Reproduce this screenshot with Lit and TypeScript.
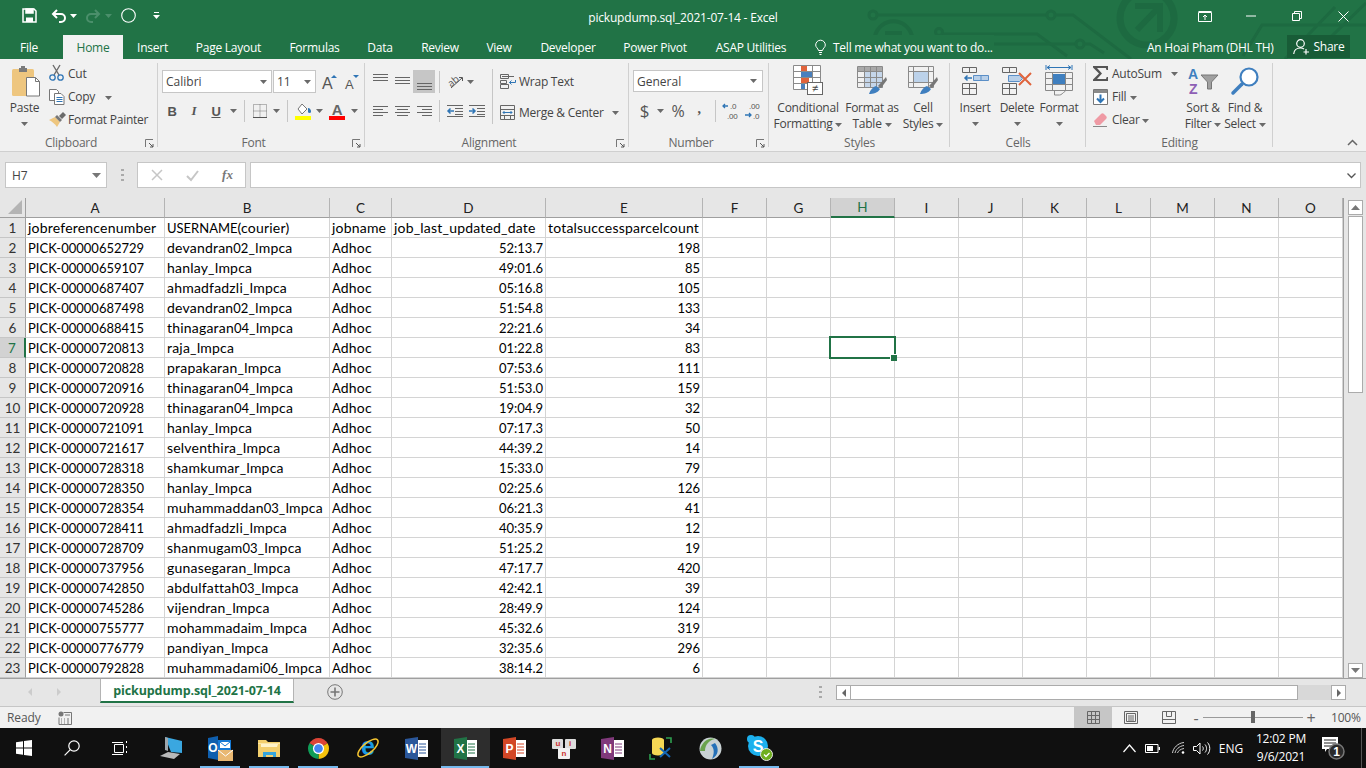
import { LitElement, html, css, svg } from "lit";
import { customElement } from "lit/decorators.js";

const C5 = html`<svg class="car" width="7" height="4" viewBox="0 0 7 4"><path d="M0 0h7L3.500 4z" fill="#6a6a6a"/></svg>`;
const CW = html`<svg width="7" height="4" viewBox="0 0 7 4"><path d="M0 0h7L3.500 4z" fill="#fff"/></svg>`;
const CD = html`<svg width="7" height="4" viewBox="0 0 7 4"><path d="M0 0h7L3.500 4z" fill="#4b8f6b"/></svg>`;
const launcher = html`<svg class="launch" width="9" height="9" viewBox="0 0 9 9" fill="none" stroke="#777"><path d="M.5 8V.5H8"/><path d="M4 4l4 4M8 5v3H5" stroke="#555"/></svg>`;

const pattern = html`<svg class="pattern" width="506" height="59" viewBox="0 0 506 59" fill="none" stroke="#1d6a41" stroke-width="3">
  <circle cx="13" cy="15" r="4"/><path d="M17 15H187"/><circle cx="191" cy="15" r="4"/><path d="M195 15h18l50 38 8 6"/>
  <path d="M15 36a19 19 0 0 1 37 0M25 33h17" stroke-width="4"/>
  <circle cx="79" cy="32" r="3.500"/><path d="M83 34H177l30 22"/><path d="M133 44h82"/><circle cx="220" cy="44" r="4"/><path d="M224 44h6l14 9"/>
  <path d="M287 -9a27 27 0 1 0 .1 0z" stroke-width="7"/><path d="M277 30L300 6M275 6h25v26" stroke-width="6"/>
  <path d="M383 56l19-31H506M448 59L506 3M425 59l50-52"/>
</svg>`;

const saveI = html`<svg width="15" height="15" viewBox="0 0 15 15" fill="none" stroke="#fff" stroke-width="1.500"><path d="M1 1h11l2 2v11H1z"/><path d="M4 1h7v4H4z" fill="#fff"/><path d="M4 9.500h7V14H4z" fill="#fff" stroke="none"/></svg>`;
const undoI = html`<svg width="15" height="14" viewBox="0 0 15 14" fill="none" stroke="#fff" stroke-width="2"><path d="M6 1L2 5l4 4M2 5h8a3.600 3.600 0 0 1 0 8H8"/></svg>`;
const redoI = html`<svg width="15" height="14" viewBox="0 0 15 14" fill="none" stroke="#4b8f6b" stroke-width="2"><path d="M9 1l4 4-4 4M13 5H5a3.600 3.600 0 0 0 0 8h2"/></svg>`;
const circI = html`<svg width="15" height="15" viewBox="0 0 15 15" fill="none" stroke="#fff" stroke-width="1.100"><circle cx="7.500" cy="7.500" r="6.800"/></svg>`;
const custI = html`<svg width="7" height="7" viewBox="0 0 7 7" fill="#fff"><path d="M1 0h5v1H1zM0 3h7L3.500 7z"/></svg>`;
const rdI = html`<svg width="14" height="11" viewBox="0 0 14 11" fill="none" stroke="#fff"><path d="M.5 1.500h13v9H.5zM.5 .5h13"/><path d="M7 9V4M5 6l2-2 2 2"/></svg>`;
const minI = html`<svg width="10" height="10" viewBox="0 0 10 10"><path d="M0 5h10" stroke="#fff"/></svg>`;
const resI = html`<svg width="10" height="10" viewBox="0 0 10 10" fill="none" stroke="#fff"><path d="M2.500 2.500V.5h7v7h-2M.5 2.500h7v7h-7z"/></svg>`;
const clsI = html`<svg width="11" height="11" viewBox="0 0 11 11" stroke="#fff"><path d="M.5.500l10 10M10.500.500l-10 10"/></svg>`;
const bulbI = html`<svg width="11" height="15" viewBox="0 0 11 15" fill="none" stroke="#fff"><path d="M3.500 10.500C3 8 .7 7.500.7 5a4.800 4.800 0 0 1 9.600 0c0 2.500-2.300 3-2.800 5.500zM4 12.500h3M4.500 14.500h2"/></svg>`;
const personI = html`<svg width="17" height="16" viewBox="0 0 17 16" fill="none" stroke="#fff" stroke-width="1.200"><circle cx="7.500" cy="4.500" r="3.800"/><path d="M.7 15c.3-3.500 2.800-6 6.800-6 1.500 0 2.500.3 3.500 1M13 10v5.500M10.500 13H16"/></svg>`;

const pasteI = html`<svg class="pasteic" width="29" height="32" viewBox="0 0 29 32"><rect x="0" y="4" width="22" height="27" rx="1.500" fill="#eec67f"/><path d="M7 3h2V1h4v2h2v4H7z" fill="#7a7a7a"/><path d="M14.500 12.500h9l4 4v14.500h-13z" fill="#fff" stroke="#777"/><path d="M23.500 12.500v4h4" fill="none" stroke="#777"/></svg>`;
const cutI = html`<svg width="15" height="16" viewBox="0 0 15 16" fill="none"><path d="M5 10L11 0M10 10L4 0" stroke="#6b6b6b" stroke-width="1.400"/><circle cx="3.500" cy="12.500" r="2.700" stroke="#2f75b5" stroke-width="1.300"/><circle cx="11.500" cy="12.500" r="2.700" stroke="#2f75b5" stroke-width="1.300"/></svg>`;
const copyI = html`<svg width="16" height="16" viewBox="0 0 16 16" fill="#fff" stroke="#777"><path d="M.5.500h7l2 2v9h-9z"/><path d="M5.500 4.500h6.500l3 3v8h-9.500z"/><path d="M7.500 8.500h6M7.500 10.500h6M7.500 12.500h6" stroke="#2f75b5"/></svg>`;
const fpI = html`<svg width="17" height="15" viewBox="0 0 17 15"><path d="M0 8l6-3 5 5-3 5C6 12 3 9.500 0 8z" fill="#eec67f"/><path d="M6 5l5 5 2-2-5-5z" fill="#777"/><path d="M10 4l4-4 3 3-4 4z" fill="#6b6b6b"/></svg>`;

const borderI = html`<svg width="14" height="14" viewBox="0 0 14 14" fill="none" stroke="#777" stroke-dasharray="1 1"><path d="M.5.500h13v13H.5zM7 .5v13M.5 7h13"/><path d="M0 13.500h14" stroke="#555" stroke-dasharray="none"/></svg>`;
const fillI = html`<svg width="17" height="17" viewBox="0 0 17 17"><path d="M7 1l5 5-5 5-4-5z" fill="#fff" stroke="#777"/><path d="M13 5c2 0 3 2 3 3.500a1.500 1.500 0 0 1-3 0z" fill="#2f75b5"/><rect x="0" y="13" width="16" height="4" fill="#ffff00"/></svg>`;
const colorI = html`<svg width="16" height="17" viewBox="0 0 16 17"><text x="8" y="12" text-anchor="middle" font-family="Liberation Sans" font-size="15" font-weight="700" fill="#666">A</text><rect y="13" width="16" height="4" fill="#ff0000"/></svg>`;
const growI = html`<svg width="18" height="16" viewBox="0 0 18 16"><text x="0" y="15" font-family="Liberation Sans" font-size="16" fill="#555">A</text><path d="M9 4l3-3 3 3z" fill="#2f75b5"/></svg>`;
const shrinkI = html`<svg width="16" height="16" viewBox="0 0 16 16"><text x="1" y="15" font-family="Liberation Sans" font-size="13" fill="#555">A</text><path d="M9 1h6l-3 3z" fill="#2f75b5"/></svg>`;

const lines = (h: number, ys: number[], xs: [number, number][]) => html`<svg width="15" height=${h} viewBox=${`0 0 15 ${h}`} stroke="#666">${ys.map((y, i) => svg`<path d=${`M${xs[i][0]} ${y}.5H${xs[i][1]}`}></path>`)}</svg>`;
const F: [number, number] = [0, 15];
const alTop = lines(23, [4, 7, 10], [F, F, F]);
const alMid = lines(23, [7, 10, 13], [F, F, F]);
const alBot = lines(23, [13, 16, 19], [F, F, F]);
const alL = lines(12, [1, 4, 7, 10], [F, [0, 10], F, [0, 10]]);
const alC = lines(12, [1, 4, 7, 10], [F, [2, 13], F, [2, 13]]);
const alR = lines(12, [1, 4, 7, 10], [F, [5, 15], F, [5, 15]]);
const orientI = html`<svg width="16" height="15" viewBox="0 0 16 15"><text x="1" y="11" transform="rotate(-40 6 8)" font-family="Open Sans" font-size="10" fill="#555">ab</text><path d="M4 14L15 4M12 3.500h3.500v3.500" fill="none" stroke="#555"/></svg>`;
const outI = html`<svg width="16" height="12" viewBox="0 0 16 12" fill="none"><path d="M0 .5h16M8 3.500h8M8 6.500h8M8 9.500h8M0 11.500h16" stroke="#666"/><path d="M7 6H1M3.500 3.500L1 6l2.500 2.500" stroke="#2f75b5" stroke-width="1.500"/></svg>`;
const inI = html`<svg width="16" height="12" viewBox="0 0 16 12" fill="none"><path d="M0 .5h16M8 3.500h8M8 6.500h8M8 9.500h8M0 11.500h16" stroke="#666"/><path d="M0 6h6M3.500 3.500L6 6 3.500 8.500" stroke="#2f75b5" stroke-width="1.500"/></svg>`;
const wrapI = html`<svg width="16" height="15" viewBox="0 0 16 15" fill="none" stroke="#666"><path d="M.5.500h8v4h-8zM.5 6.500h6v3h-6zM.5 10.500h8v4h-8zM2 2.500h12"/><path d="M15.500 6v2.500h-6M11.500 6.500l-2 2 2 2" stroke="#2f75b5"/></svg>`;
const mergeI = html`<svg width="15" height="15" viewBox="0 0 15 15" fill="none" stroke="#666"><path d="M.5.500h14v14H.5zM.5 4.500h14M.5 10.500h14M4.500 10.500v4M10.500 10.500v4"/><path d="M3 7.500h9M4.500 6L3 7.500 4.500 9M10.500 6L12 7.500 10.500 9" stroke="#2f75b5"/></svg>`;
const decL = html`<svg width="16" height="17" viewBox="0 0 16 17"><text x="8" y="7" font-family="Liberation Sans" font-size="8" fill="#555">.0</text><text x="5" y="16.500" font-family="Liberation Sans" font-size="8" fill="#555">.00</text><path d="M6 4H1M3 2L1 4l2 2" fill="none" stroke="#2f75b5" stroke-width="1.300"/></svg>`;
const decR = html`<svg width="16" height="17" viewBox="0 0 16 17"><text x="5" y="7" font-family="Liberation Sans" font-size="8" fill="#555">.00</text><text x="9" y="16.500" font-family="Liberation Sans" font-size="8" fill="#555">.0</text><path d="M1 13h6M5 11l2 2-2 2" fill="none" stroke="#2f75b5" stroke-width="1.300"/></svg>`;

const gridLines = svg`<path d="M.5.500h25v21H.5zM.5 5.500h25M.5 11.500h25M.5 16.500h25M7.500.500v21M13.500.500v21M19.500.500v21" fill="none" stroke="#8a8a8a"/>`;
const brush = svg`<path d="M12 28c4 0 9-1 11-5l-4-3c-3 1-6 4-7 8z" fill="#3f7fbf"/><path d="M21 20l8-9 1 3-6 8z" fill="#777"/>`;
const condI = html`<svg width="31" height="31" viewBox="0 0 31 31"><path d="M.5.500h27v24H.5zM.5 6.500h27M.5 12.500h27M.5 18.500h27M8.500.500v24M19.500.500v24" fill="#fff" stroke="#8a8a8a"/><rect x="8" y="1" width="6" height="5" fill="#e0643c"/><rect x="8" y="7" width="11" height="5" fill="#4a80bd"/><rect x="8" y="13" width="8" height="5" fill="#e0643c"/><rect x="8" y="19" width="4" height="5" fill="#4a80bd"/><rect x="14.500" y="17.500" width="15" height="12" fill="#fff" stroke="#666"/><text x="22" y="27" text-anchor="middle" font-family="Liberation Sans" font-size="11" fill="#444">≠</text></svg>`;
const fmtTableI = html`<svg width="30" height="29" viewBox="0 0 30 29"><rect x="1" y="1" width="24" height="5" fill="#a9a9a9"/><rect x="8" y="6" width="18" height="16" fill="#c5d6ea"/>${gridLines}${brush}</svg>`;
const cellStyleI = html`<svg width="30" height="29" viewBox="0 0 30 29"><rect x="6" y="6" width="15" height="10" fill="#bcd2ea"/><path d="M.5.500h25v21H.5zM.5 5.500h25M.5 16.500h25M5.500.500v21M20.500.500v21" fill="none" stroke="#8a8a8a"/>${brush}</svg>`;
const insI = html`<svg width="27" height="28" viewBox="0 0 27 28" fill="none" stroke="#666"><path d="M.5.500h14v5H.5zM7.500.500v5M.5 16.500h14v11H.5zM.5 21.500h14M7.500 16.500v11"/><path d="M11.500 8.500h15v5h-15zM19 8.500v5" fill="#b9d0e9" stroke="#5b8fc7"/><path d="M10 11H3M5.500 8.500L3 11l2.500 2.500" stroke="#2f75b5" stroke-width="1.500"/></svg>`;
const delI = html`<svg width="31" height="28" viewBox="0 0 31 28" fill="none" stroke="#666"><path d="M.5.500h14v5H.5zM7.500.500v5M.5 16.500h14v11H.5zM.5 21.500h14M7.500 16.500v11"/><path d="M6.500 8.500h11l3 3-3 3h-11z" fill="#b9d0e9" stroke="#5b8fc7"/><path d="M17 6l12 12M29 6L17 18" stroke="#e0643c" stroke-width="2"/></svg>`;
const fmtI = html`<svg width="29" height="32" viewBox="0 0 29 32" fill="none" stroke="#888"><path d="M1 0v5M27 0v5M2 2.500h24M5 .500L2 2.500l3 2M23 .500l3 2-3 2" stroke="#2f75b5"/><path d="M.5 7.500h27v18H.5zM.5 13.500h27M.5 19.500h27M7.500 7.500v18M20.500 7.500v18"/><rect x="8" y="9" width="12" height="10" fill="#3f7fbf" stroke="none"/><path d="M9.500 26v4h5c2 0 3-2 6-4"/></svg>`;
const sigmaI = html`<svg width="16" height="15" viewBox="0 0 16 15"><path d="M0 0h15v4h-1.500l-.7-2H4l5 5.500L4 13h9l.7-2H15v4H0v-1.500L6 7.500 0 1.500z" fill="#555"/></svg>`;
const fillDI = html`<svg width="15" height="16" viewBox="0 0 15 16" fill="#fff"><path d="M.5.500h14v15H.5z" stroke="#777"/><rect x="1" y="1" width="13" height="3" fill="#8a8a8a"/><path d="M7.500 5.500v7M4 9.500l3.500 3.500L11 9.500" fill="none" stroke="#2f75b5" stroke-width="2"/></svg>`;
const clearI = html`<svg width="15" height="14" viewBox="0 0 15 14"><path d="M1 8l7-7c1-1 2-1 3 0l2 2c1 1 1 2 0 3l-6 6H3z" fill="#ef9aa4"/><path d="M0 13.500h14" stroke="#888"/></svg>`;
const sortI = html`<svg width="31" height="28" viewBox="0 0 31 28"><text x="0" y="12" font-family="Liberation Sans" font-size="14" font-weight="700" fill="#3f7fbf">A</text><text x="1" y="27" font-family="Liberation Sans" font-size="14" font-weight="700" fill="#8e5fb5">Z</text><path d="M13 8h17l-6.500 7v7h-4v-7z" fill="#a0a0a0" stroke="#777"/></svg>`;
const findI = html`<svg width="29" height="28" viewBox="0 0 29 28" fill="none"><circle cx="18" cy="10" r="8.500" stroke="#3f7fbf" stroke-width="2.200" fill="#fff"/><path d="M11 17L2 26" stroke="#3f7fbf" stroke-width="3.500" stroke-linecap="round"/></svg>`;

const xI = html`<svg width="12" height="12" viewBox="0 0 12 12" stroke="#c6c6c6" stroke-width="1.500"><path d="M1 1l10 10M11 1L1 11"/></svg>`;
const okI = html`<svg width="13" height="11" viewBox="0 0 13 11" fill="none" stroke="#c6c6c6" stroke-width="2"><path d="M1 6l4 4 7-9"/></svg>`;
const dots = html`<svg width="3" height="12" viewBox="0 0 3 12" fill="#aaa"><rect y="0" width="3" height="2"/><rect y="5" width="3" height="2"/><rect y="10" width="3" height="2"/></svg>`;

const macroI = html`<svg width="14" height="14" viewBox="0 0 14 14"><circle cx="3" cy="3" r="2.500" fill="#777"/><path d="M5.500 1.500h8v12H1V6.500" fill="none" stroke="#777"/><path d="M3 8h1M6 8h1M9 8h2M3 10h1M6 10h1M9 10h2M3 12h1M6 12h1M9 12h2M7 4h5" stroke="#777"/></svg>`;
const vNormal = html`<svg width="13" height="13" viewBox="0 0 13 13" fill="none" stroke="#666"><path d="M.5.500h12v12H.5zM4.500.500v12M8.500.500v12M.5 4.500h12M.5 8.500h12"/></svg>`;
const vPage = html`<svg width="14" height="13" viewBox="0 0 14 13" fill="none" stroke="#666"><path d="M.5.500h13v12H.5zM2.500 2.500h9v8h-9zM4 5h6M4 7h6M4 9h6"/></svg>`;
const vBreak = html`<svg width="14" height="13" viewBox="0 0 14 13" fill="none" stroke="#666"><path d="M.5 12.500V.500h13v12zM.5 8.500h13M4.500.500v5h5v-5"/></svg>`;

const winI = html`<svg width="16" height="16" viewBox="0 0 16 16" fill="#fff"><path d="M0 2.200l7-1v6.300H0zM8 1l8-1v7.500H8zM0 8.500h7v6.300l-7-1zM8 8.500h8V16l-8-1.100z"/></svg>`;
const searchI = html`<svg width="16" height="16" viewBox="0 0 16 16" fill="none" stroke="#fff" stroke-width="1.200"><circle cx="10" cy="6" r="5.200"/><path d="M6.300 9.700L.6 15.400"/></svg>`;
const taskI = html`<svg width="16" height="15" viewBox="0 0 16 15" fill="none" stroke="#fff"><path d="M2.500 3.500h9v8h-9zM0 1.500h11M0 13.500h11M14.500 0v2M14.500 5v2M14.500 10v2"/></svg>`;
const pcI = html`<svg width="24" height="24" viewBox="0 0 24 24"><path d="M5 1l17 4v12l-11-1z" fill="#3aa7e0"/><path d="M5 1l3 1v13l-3-1z" fill="#9fa7ad"/><path d="M0 20l8-4 12 2-6 5z" fill="#b9b9b9"/></svg>`;
const outlookI = html`<svg width="25" height="25" viewBox="0 0 25 25"><path d="M0 2l10-2v24L0 22z" fill="#0f5fae"/><rect x="10" y="4" width="13" height="11" fill="#1579d4"/><path d="M12 6h10v6H12z" fill="#fff"/><path d="M12 6l5 4 5-4" fill="none" stroke="#1579d4"/><text x="5" y="16" text-anchor="middle" font-family="Liberation Sans" font-size="12" font-weight="700" fill="#fff">O</text><rect x="10" y="14" width="15" height="11" fill="#e9b872"/><path d="M10 14l7.500 6 7.500-6" fill="none" stroke="#fff"/></svg>`;
const folderI = html`<svg width="23" height="19" viewBox="0 0 23 19"><path d="M0 1h8l2 2h12v15H0z" fill="#f3cf6d"/><rect x="0" y="4" width="22" height="1" fill="#fbe7a7"/><path d="M3 5h17l-1 3H3z" fill="#fff3c8"/><path d="M5 18v-5h13v5h-3v-2H8v2z" fill="#35a5dc"/></svg>`;
const chromeI = html`<svg width="23" height="23" viewBox="0 0 24 24"><path d="M12 12L2.500 6.500A11 11 0 0 1 21.500 6.500z" fill="#dc4437"/><path d="M12 12l9.500-5.500A11 11 0 0 1 12 23z" fill="#f4c20d"/><path d="M12 12v11A11 11 0 0 1 2.500 6.500z" fill="#0f9d58"/><circle cx="12" cy="12" r="5.800" fill="#fff"/><circle cx="12" cy="12" r="4.500" fill="#4285f4"/></svg>`;
const ieI = html`<svg width="24" height="24" viewBox="0 0 24 24" fill="none"><text x="12" y="19" text-anchor="middle" font-family="Liberation Sans" font-size="25" font-weight="700" fill="#1a9be6">e</text><ellipse cx="12" cy="12" rx="12.500" ry="5" transform="rotate(-40 12 12)" stroke="#f5c531" stroke-width="1.500"/></svg>`;
const officeI = (c: string, l: string) => html`<svg width="23" height="23" viewBox="0 0 23 23"><rect x="10" y="3" width="13" height="17" fill="#fff"/><path d="M14 7h7M14 10h7M14 13h7M14 16h7" stroke=${c}/><path d="M0 2l13-2v23L0 21z" fill=${c}/><text x="6.500" y="16" text-anchor="middle" font-family="Liberation Sans" font-size="12" font-weight="700" fill="#fff">${l}</text></svg>`;
const uniI = html`<svg width="24" height="22" viewBox="0 0 24 22" font-family="Liberation Sans" font-size="8" font-weight="700" fill="#c33"><rect y="2" width="11" height="10" rx="1" fill="#ddd"/><rect x="13" y="2" width="11" height="10" rx="1" fill="#ddd"/><rect x="6" y="11" width="12" height="11" rx="1" fill="#f1f1f1"/><text x="3.500" y="9">u</text><text x="17" y="9">i</text><text x="9.500" y="19">n</text></svg>`;
const dbI = html`<svg width="23" height="23" viewBox="0 0 23 23" fill="none"><path d="M2 3a6 2.500 0 0 1 12 0v13a6 2.500 0 0 1-12 0z" fill="#f7d854"/><path d="M16 1h5v5M0 17v5h5" stroke="#2e9e4f" stroke-width="1.600"/><path d="M10 20l10-9M20 20L10 11" stroke="#1467b5" stroke-width="2"/></svg>`;
const globeI = html`<svg width="23" height="23" viewBox="0 0 23 23"><circle cx="11.500" cy="11.500" r="11" fill="#c9d2d4"/><path d="M1 14C2 6 9 0 16 2c-6 1-10 6-10 12z" fill="#6aa34e"/><path d="M16 6c4 5 4 12-3 16 2-5 3-10-1-14z" fill="#2571b8"/></svg>`;
const skypeI = html`<svg width="26" height="26" viewBox="0 0 26 26"><circle cx="11" cy="11" r="10" fill="#1cb0ed"/><circle cx="4" cy="4" r="4" fill="#1cb0ed"/><circle cx="18" cy="18" r="4" fill="#1cb0ed"/><text x="11" y="17" text-anchor="middle" font-family="Liberation Sans" font-size="16" font-weight="700" fill="#fff">S</text><circle cx="19.500" cy="19.500" r="6" fill="#6fae1e" stroke="#e8e8e8"/><path d="M17 19.500l2 2 3.500-3.500" fill="none" stroke="#fff" stroke-width="1.300"/></svg>`;

const upI = html`<svg width="13" height="9" viewBox="0 0 13 9" fill="none" stroke="#fff" stroke-width="1.200"><path d="M.5 8l6-7 6 7"/></svg>`;
const batI = html`<svg width="15" height="9" viewBox="0 0 15 9"><path d="M.5.500h12.500v8H.5z" fill="none" stroke="#fff"/><rect x="2" y="2" width="6" height="5" fill="#fff"/><rect x="13.500" y="3" width="1.500" height="3" fill="#fff"/></svg>`;
const wifiI = html`<svg width="13" height="12" viewBox="0 0 13 12" fill="none" stroke="#ccc"><path d="M.5 11C1 6 6 1 12 .5M3 11c.5-3 4-7 9-7.500M5.500 11c.5-2 3-4 6.500-4.500"/><circle cx="11" cy="10.500" r="1.300" fill="#fff" stroke="none"/></svg>`;
const spkI = html`<svg width="17" height="13" viewBox="0 0 17 13" fill="none" stroke="#fff"><path d="M.5 4.500h3l3.500-3.500v11L3.500 8.500h-3z"/><path d="M9.500 4.500c1 1 1 3 0 4M12 2.500c2 2 2 6 0 8M14.500 .5c3 3 3 9 0 12"/></svg>`;
const noteI = html`<svg width="24" height="22" viewBox="0 0 24 22"><path d="M1 0h16v12H6l-2 3v-3H1z" fill="#fff"/><path d="M3 3h12M3 6h12M3 9h8" stroke="#222"/><circle cx="15.500" cy="14.500" r="7.500" fill="#2a2a2a" stroke="#777" stroke-width="1.500"/><text x="15.500" y="19" text-anchor="middle" font-family="Liberation Sans" font-size="12" font-weight="700" fill="#fff">1</text></svg>`;

const DATA: [string, string, string, number][] = [
  ["PICK-00000652729", "devandran02_Impca", "52:13.7", 198],
  ["PICK-00000659107", "hanlay_Impca", "49:01.6", 85],
  ["PICK-00000687407", "ahmadfadzli_Impca", "05:16.8", 105],
  ["PICK-00000687498", "devandran02_Impca", "51:54.8", 133],
  ["PICK-00000688415", "thinagaran04_Impca", "22:21.6", 34],
  ["PICK-00000720813", "raja_Impca", "01:22.8", 83],
  ["PICK-00000720828", "prapakaran_Impca", "07:53.6", 111],
  ["PICK-00000720916", "thinagaran04_Impca", "51:53.0", 159],
  ["PICK-00000720928", "thinagaran04_Impca", "19:04.9", 32],
  ["PICK-00000721091", "hanlay_Impca", "07:17.3", 50],
  ["PICK-00000721617", "selventhira_Impca", "44:39.2", 14],
  ["PICK-00000728318", "shamkumar_Impca", "15:33.0", 79],
  ["PICK-00000728350", "hanlay_Impca", "02:25.6", 126],
  ["PICK-00000728354", "muhammaddan03_Impca", "06:21.3", 41],
  ["PICK-00000728411", "ahmadfadzli_Impca", "40:35.9", 12],
  ["PICK-00000728709", "shanmugam03_Impca", "51:25.2", 19],
  ["PICK-00000737956", "gunasegaran_Impca", "47:17.7", 420],
  ["PICK-00000742850", "abdulfattah03_Impca", "42:42.1", 39],
  ["PICK-00000745286", "vijendran_Impca", "28:49.9", 124],
  ["PICK-00000755777", "mohammadaim_Impca", "45:32.6", 319],
  ["PICK-00000776779", "pandiyan_Impca", "32:35.6", 296],
  ["PICK-00000792828", "muhammadami06_Impca", "38:14.2", 6],
];
const COLS = "ABCDEFGHIJKLMNO".split("");

/* Calibri has narrow capitals and figures: Lato needs those runs a little smaller to keep its widths. */
const txt = (s: string) => s.split(/([A-Z0-9:.\-]+)/).map((p, i) => (i % 2 ? html`<span class="cap">${p}</span>` : p));

@customElement("app-root")
export class AppRoot extends LitElement {
  static styles = css`
    :host { display: block; width: 1366px; height: 768px; overflow: hidden; font-family: "Open Sans", "Liberation Sans", sans-serif; font-size: 12px; color: #444; background: #e6e6e6; }
    * { box-sizing: border-box; }
    .c { display: flex; align-items: center; justify-content: center; min-width: 0; white-space: nowrap; }
    svg { display: block; flex: none; overflow: visible; }

    .header { position: relative; height: 59px; background: #217346; color: #fff; overflow: hidden; }
    .pattern { position: absolute; left: 860px; top: 0; }
    .titlebar { position: relative; height: 35px; display: grid; grid-template-columns: 1fr auto 1fr; align-items: center; }
    .qat { display: grid; grid-template-columns: 30px 28px 2px 7px 24px 6px 34px 23px; padding-left: 14px; margin-top: -4px; height: 20px; }
    .title { font-size: 12px; letter-spacing: -.2px; }
    .win { display: grid; grid-template-columns: 47px 46px 46px 46px; justify-self: end; height: 31px; margin-top: -3px; }
    .tabs { position: relative; height: 24px; display: flex; align-items: stretch; letter-spacing: -.25px; }
    .tabs .c { height: 24px; }
    .t-file { width: 58px; margin-right: 5px; } .t-home { width: 60px; background: #f1f1f1; color: #217346; }
    .t-ins { width: 59px; } .t-pl { width: 93px; } .t-fo { width: 79px; } .t-da { width: 52px; } .t-re { width: 68px; }
    .t-vi { width: 50px; } .t-de { width: 88px; } .t-pp { width: 86px; } .t-as { width: 106px; }
    .tell { width: 190px; justify-content: flex-start; gap: 7px; padding-left: 11px; background: #217346; margin-right: 153px; }
    .user { width: 140px; justify-content: flex-start; padding-left: 0; }
    .share { width: 63px; height: 23px !important; background: #185c37; gap: 4px; }

    .ribbon { height: 93px; display: flex; background: #f1f1f1; border-bottom: 1px solid #cfcfcf; letter-spacing: -.25px; }
    .group { display: flex; flex-direction: column; flex: none; position: relative; }
    .group::after { content: ""; position: absolute; right: 0; top: 4px; bottom: 4px; width: 1px; background: #d0d0d0; }
    .body { height: 76px; display: flex; }
    .glabel { height: 16px; line-height: 15px; text-align: center; color: #666; position: relative; }
    .pr { padding-right: 16px; }
    .launch { position: absolute; right: 4px; top: 4px; }
    .g-clip { width: 158px; } .g-font { width: 207px; } .g-align { width: 264px; } .g-num { width: 140px; }
    .g-sty { width: 181px; } .g-cells { width: 136px; } .g-edit { width: 187px; }

    .big { display: flex; flex-direction: column; align-items: center; padding-top: 2px; flex: none; }
    .bigicon { height: 39px; display: flex; align-items: center; justify-content: center; }
    .bigtext { line-height: 16px; text-align: center; white-space: nowrap; }
    .car { display: inline-block; vertical-align: middle; }
    .bigcar { display: flex; justify-content: center; height: 16px; align-items: center; }
    .b-paste { width: 49px; }
    .pasteic { margin-left: 3px; }
    .smalls { padding-top: 2px; display: flex; flex-direction: column; }
    .sm { display: flex; align-items: center; height: 23px; white-space: nowrap; }
    .sm1 { height: 24px; }
    .smi { width: 19px; display: flex; align-items: center; justify-content: flex-start; flex: none; }
    .clip-small { width: 109px; }
    .mlc { margin-left: 10px; } .mla { margin-left: 4px; } .mlb { margin-left: 2px; }
    .edit-small { width: 89px; margin-left: 7px; }
    .mlas { margin-left: 9px; }

    .cols { display: flex; flex-direction: column; padding-top: 11px; }
    .row { display: grid; height: 23px; }
    .row2 { margin-top: 6px; height: 24px; }
    .combo { height: 23px; background: #fff; border: 1px solid #c6c6c6; display: flex; align-items: center; justify-content: space-between; padding: 0 4px 0 3px; letter-spacing: 0; }
    .fr1 { grid-template-columns: 111px 44px 27px 16px; padding-left: 4px; width: 207px; }
    .fr1 .combo { margin-right: 1px; }
    .fr2 { grid-template-columns: 20px 24px 20px 14px 8px 23px 10px 12px 20px 12px 24px 10px; padding-left: 4px; width: 207px; }
    .b { font: 700 13px "Liberation Sans", sans-serif; color: #555; }
    .i { font: italic 700 13px "Liberation Serif", serif; color: #555; }
    .u { font: 700 13px "Liberation Sans", sans-serif; color: #555; text-decoration: underline; }
    .sep { width: 1px; height: 22px; background: #c6c6c6; justify-self: center; align-self: center; }
    .ar1 { grid-template-columns: 22px 22px 22px 8px 24px 6px; padding-left: 4px; }
    .ar2 { grid-template-columns: 22px 22px 22px 8px 24px 20px; padding-left: 4px; }
    .active { background: #c6c6c6; }
    .vsep { width: 1px; height: 55px; background: #c6c6c6; margin: 10px 7px 0 5px; }
    .alright { width: 125px; display: flex; flex-direction: column; }
    .alright .sm { height: 23px; }
    .alright .m2 { height: 24px; margin-top: 7px; }
    .alright .smi { width: 19px; }
    .mlm { margin-left: 8px; }
    .n-combo { width: 130px; margin-left: 4px; height: 22px; padding-right: 5px; }
    .nr2 { grid-template-columns: 23px 8px 28px 14px 18px 12px 32px; padding-left: 4px; margin-top: 7px; }
    .dollar { font-size: 17px; color: #555; }
    .pct { font-size: 16px; color: #555; letter-spacing: 0; }
    .comma { font: 700 14px "Liberation Serif", serif; color: #555; margin-top: -4px; }
    .s1 { margin-left: 7px; width: 64px; } .s2 { width: 64px; } .s3 { width: 38px; }
    .ce { width: 42px; } .ce1 { margin-left: 4px; }
    .e { width: 42px; }
    .tail { flex: 1; display: flex; align-items: flex-end; justify-content: flex-end; padding: 0 8px 5px 0; }

    .fbar { height: 46px; display: flex; padding-top: 10px; background: #e6e6e6; }
    .namebox { margin-left: 5px; width: 102px; height: 26px; background: #fff; border: 1px solid #c6c6c6; display: flex; align-items: center; justify-content: space-between; padding: 0 5px 0 6px; letter-spacing: 0; font-size: 12px; }
    .fdots { width: 30px; height: 26px; }
    .fxbox { width: 109px; height: 26px; background: #fff; border: 1px solid #c6c6c6; display: grid; grid-template-columns: 37px 35px 35px; }
    .fx { font: italic 700 13px "Liberation Serif", serif; color: #777; }
    .finput { flex: 1; margin: 0 5px 0 4px; height: 26px; background: #fff; border: 1px solid #c6c6c6; display: flex; align-items: center; justify-content: flex-end; padding-right: 4px; }

    .sheet { height: 480px; display: flex; }
    .grid { width: 1344px; display: grid; grid-template-columns: 26px 139px 165px 62px 154px 157px repeat(10, 64px); grid-auto-rows: 20px; background: #fff; border-right: 1px solid #9f9f9f; font-family: Lato, "Liberation Sans", sans-serif; font-size: 14px; color: #000; letter-spacing: .2px; }
    .cap { font-size: 13px; letter-spacing: 0; }
    .corner { background: #e6e6e6; border-right: 1px solid #9f9f9f; border-bottom: 1px solid #9f9f9f; position: relative; }
    .corner svg { position: absolute; right: 3px; bottom: 3px; }
    .ch { background: #e6e6e6; border-right: 1px solid #b4b4b4; border-bottom: 1px solid #9f9f9f; display: flex; align-items: center; justify-content: center; color: #222; font-size: 13.500px; letter-spacing: 0; }
    .ch.on { background: #d2d2d2; border-bottom: 2px solid #217346; color: #217346; }
    .rh { background: #e6e6e6; border-right: 1px solid #9f9f9f; border-bottom: 1px solid #c6c6c6; display: flex; align-items: center; justify-content: center; color: #333; font-size: 13.500px; letter-spacing: 0; }
    .rh.on { background: #d2d2d2; border-right: 2px solid #217346; color: #217346; }
    .cell { border-right: 1px solid #d4d4d4; border-bottom: 1px solid #d4d4d4; padding: 0 2px; line-height: 20px; white-space: nowrap; overflow: hidden; }
    .num { text-align: right; }
    .sel { position: relative; overflow: visible; }
    .selbox { position: absolute; left: -2px; top: -2px; width: 67px; height: 23px; border: 2px solid #217346; }
    .handle { position: absolute; right: -3px; bottom: -4px; width: 7px; height: 7px; background: #217346; border-left: 1px solid #fff; border-top: 1px solid #fff; }
    .vs { width: 22px; padding: 2px 0 0 4px; background: #e6e6e6; display: flex; flex-direction: column; }
    .sb { width: 15px; height: 15px; background: #fff; border: 1px solid #ababab; display: flex; align-items: center; justify-content: center; flex: none; }
    .vthumb { width: 15px; height: 177px; background: #fff; border: 1px solid #ababab; margin-top: 1px; }
    .spacer { flex: 1; }

    .tabbar { height: 29px; background: #e6e6e6; border-top: 1px solid #9f9f9f; border-bottom: 1px solid #c6c6c6; display: flex; }
    .nav { width: 29px; height: 26px; } .nav0 { width: 15px; }
    .stab { margin-left: 27px; width: 194px; height: 24px; background: #fff; border: 1px solid #b4b4b4; border-top: 0; border-bottom: 2px solid #217346; color: #217346; font-weight: 700; font-size: 12.500px; letter-spacing: -.1px; }
    .plus { width: 82px; height: 26px; }
    .hd { width: 460px; height: 26px; padding-left: 443px; justify-content: flex-start; }
    .hs { display: flex; padding-top: 6px; }
    .hthumb { width: 447px; height: 15px; background: #fff; border: 1px solid #ababab; border-left: 0; }
    .htrack { width: 33px; height: 15px; background: #d8d8d8; }

    .status { height: 21px; background: #f1f1f1; display: flex; align-items: center; letter-spacing: -.1px; color: #555; }
    .ready { padding-left: 7px; width: 58px; }
    .stright { margin-left: auto; display: flex; align-items: center; height: 21px; }
    .vb { width: 38px; height: 21px; }
    .zm { font-size: 16px; width: 16px; color: #666; }
    .slider { width: 100px; height: 1px; background: #9a9a9a; position: relative; margin-left: -1px; }
    .thumb { position: absolute; left: 48px; top: -6px; width: 4px; height: 12px; background: #666; }
    .pctz { width: 47px; padding-left: 12px; letter-spacing: -.2px; }

    .taskbar { height: 40px; background: #101010; display: flex; color: #fff; }
    .tk { width: 48px; height: 40px; } .sp3 { width: 3px; }
    .ap { width: 49px; height: 40px; position: relative; }
    .ap.run::after { content: ""; position: absolute; left: 4px; right: 5px; bottom: 0; height: 2px; background: #76b9ed; }
    .ap.act { background: #2d2d2d; }
    .ap.act::after { left: 0; right: 1px; }
    .tray { margin-left: auto; display: flex; height: 40px; align-items: center; }
    .tr1 { width: 24px; } .tr2 { width: 22px; } .tr3 { width: 30px; } .tr4 { width: 16px; }
    .eng { width: 44px; font-size: 12px; color: #fff; }
    .clock { width: 56px; text-align: center; font-size: 12px; line-height: 18px; letter-spacing: -.2px; white-space: nowrap; }
    .tr7 { width: 48px; }
    .edge { width: 9px; height: 40px; }
    .edge::before { content: ""; display: block; width: 1px; height: 40px; margin-left: 4px; background: #555; }
  `;

  private big(icon: unknown, l1: unknown, l2: unknown, cls: string) {
    return html`<div class="big ${cls}"><div class="bigicon">${icon}</div><div class="bigtext">${l1}</div>${l2 ? html`<div class="bigtext">${l2}</div>` : html`<div class="bigcar">${C5}</div>`}</div>`;
  }

  render() {
    return html`
      <div class="header">
        ${pattern}
        <div class="titlebar">
          <div class="qat"><div class="c">${saveI}</div><div class="c">${undoI}</div><div class="c">${CW}</div><div></div><div class="c">${redoI}</div><div class="c">${CD}</div><div class="c">${circI}</div><div class="c">${custI}</div></div>
          <div class="title">pickupdump.sql_2021-07-14 - Excel</div>
          <div class="win"><div class="c">${rdI}</div><div class="c">${minI}</div><div class="c">${resI}</div><div class="c">${clsI}</div></div>
        </div>
        <div class="tabs">
          <div class="c t-file">File</div><div class="c t-home">Home</div><div class="c t-ins">Insert</div><div class="c t-pl">Page Layout</div><div class="c t-fo">Formulas</div><div class="c t-da">Data</div><div class="c t-re">Review</div><div class="c t-vi">View</div><div class="c t-de">Developer</div><div class="c t-pp">Power Pivot</div><div class="c t-as">ASAP Utilities</div>
          <div class="c tell">${bulbI}<span>Tell me what you want to do...</span></div>
          <div class="c user">An Hoai Pham (DHL TH)</div>
          <div class="c share">${personI}<span>Share</span></div>
        </div>
      </div>

      <div class="ribbon">
        <div class="group g-clip">
          <div class="body">
            ${this.big(pasteI, "Paste", null, "b-paste")}
            <div class="smalls clip-small">
              <div class="sm sm1"><span class="smi">${cutI}</span>Cut</div>
              <div class="sm"><span class="smi">${copyI}</span>Copy<span class="mlc">${C5}</span></div>
              <div class="sm"><span class="smi">${fpI}</span>Format Painter</div>
            </div>
          </div>
          <div class="glabel pr">Clipboard${launcher}</div>
        </div>

        <div class="group g-font">
          <div class="body cols">
            <div class="row fr1">
              <div class="combo"><span>Calibri</span>${C5}</div>
              <div class="combo"><span>11</span>${C5}</div>
              <div class="c">${growI}</div><div class="c">${shrinkI}</div>
            </div>
            <div class="row row2 fr2">
              <div class="c b">B</div><div class="c i">I</div><div class="c u">U</div><div class="c">${C5}</div><div class="sep"></div>
              <div class="c">${borderI}</div><div class="c">${C5}</div><div class="sep"></div>
              <div class="c">${fillI}</div><div class="c">${C5}</div><div class="c">${colorI}</div><div class="c">${C5}</div>
            </div>
          </div>
          <div class="glabel pr">Font${launcher}</div>
        </div>

        <div class="group g-align">
          <div class="body">
            <div class="cols">
              <div class="row ar1"><div class="c">${alTop}</div><div class="c">${alMid}</div><div class="c active">${alBot}</div><div class="sep"></div><div class="c">${orientI}</div><div class="c">${C5}</div></div>
              <div class="row row2 ar2"><div class="c">${alL}</div><div class="c">${alC}</div><div class="c">${alR}</div><div class="sep"></div><div class="c">${outI}</div><div class="c">${inI}</div></div>
            </div>
            <div class="vsep"></div>
            <div class="alright cols">
              <div class="sm"><span class="smi">${wrapI}</span>Wrap Text</div>
              <div class="sm m2"><span class="smi">${mergeI}</span>Merge &amp; Center<span class="mlm">${C5}</span></div>
            </div>
          </div>
          <div class="glabel pr">Alignment${launcher}</div>
        </div>

        <div class="group g-num">
          <div class="body cols">
            <div class="combo n-combo"><span>General</span>${C5}</div>
            <div class="row nr2">
              <div class="c dollar">$</div><div class="c">${C5}</div><div class="c pct">%</div><div class="c comma">,</div><div class="sep"></div><div class="c">${decL}</div><div class="c">${decR}</div>
            </div>
          </div>
          <div class="glabel pr">Number${launcher}</div>
        </div>

        <div class="group g-sty">
          <div class="body">
            ${this.big(condI, "Conditional", html`Formatting ${C5}`, "s1")}
            ${this.big(fmtTableI, "Format as", html`Table ${C5}`, "s2")}
            ${this.big(cellStyleI, "Cell", html`Styles ${C5}`, "s3")}
          </div>
          <div class="glabel">Styles</div>
        </div>

        <div class="group g-cells">
          <div class="body">
            ${this.big(insI, "Insert", null, "ce ce1")}
            ${this.big(delI, "Delete", null, "ce")}
            ${this.big(fmtI, "Format", null, "ce")}
          </div>
          <div class="glabel">Cells</div>
        </div>

        <div class="group g-edit">
          <div class="body">
            <div class="smalls edit-small">
              <div class="sm sm1"><span class="smi">${sigmaI}</span>AutoSum<span class="mlas">${C5}</span></div>
              <div class="sm"><span class="smi">${fillDI}</span>Fill<span class="mla">${C5}</span></div>
              <div class="sm"><span class="smi">${clearI}</span>Clear<span class="mlb">${C5}</span></div>
            </div>
            ${this.big(sortI, "Sort &", html`Filter ${C5}`, "e")}
            ${this.big(findI, "Find &", html`Select ${C5}`, "e")}
          </div>
          <div class="glabel">Editing</div>
        </div>

        <div class="tail"><svg width="11" height="7" viewBox="0 0 11 7" fill="none" stroke="#666" stroke-width="1.500"><path d="M1 6l4.500-4.500L10 6"/></svg></div>
      </div>

      <div class="fbar">
        <div class="namebox"><span>H7</span><svg width="9" height="5" viewBox="0 0 9 5"><path d="M0 0h9L4.500 5z" fill="#777"/></svg></div>
        <div class="c fdots">${dots}</div>
        <div class="fxbox"><div class="c">${xI}</div><div class="c">${okI}</div><div class="c fx">fx</div></div>
        <div class="finput"><svg width="9" height="5" viewBox="0 0 9 5" fill="none" stroke="#555" stroke-width="1.300"><path d="M.5.500l4 4 4-4"/></svg></div>
      </div>

      <div class="sheet">
        <div class="grid">
          <div class="corner"><svg width="14" height="14" viewBox="0 0 14 14"><path d="M14 0v14H0z" fill="#b4b4b4"/></svg></div>
          ${COLS.map((c) => html`<div class="ch ${c === "H" ? "on" : ""}">${c}</div>`)}
          <div class="rh">1</div>
          ${["jobreferencenumber", "USERNAME(courier)", "jobname", "job_last_updated_date", "totalsuccessparcelcount"].map((t) => html`<div class="cell">${txt(t)}</div>`)}
          ${COLS.slice(5).map(() => html`<div class="cell"></div>`)}
          ${DATA.map((d, i) => html`
            <div class="rh ${i === 5 ? "on" : ""}">${i + 2}</div>
            <div class="cell">${txt(d[0])}</div><div class="cell">${txt(d[1])}</div><div class="cell">${txt("Adhoc")}</div>
            <div class="cell num">${txt(d[2])}</div><div class="cell num">${txt(String(d[3]))}</div>
            ${COLS.slice(5).map((c) => i === 5 && c === "H"
              ? html`<div class="cell sel"><div class="selbox"><div class="handle"></div></div></div>`
              : html`<div class="cell"></div>`)}
          `)}
        </div>
        <div class="vs">
          <div class="sb"><svg width="9" height="5" viewBox="0 0 9 5"><path d="M0 5h9L4.500 0z" fill="#777"/></svg></div>
          <div class="vthumb"></div>
          <div class="spacer"></div>
          <div class="sb"><svg width="9" height="5" viewBox="0 0 9 5"><path d="M0 0h9L4.500 5z" fill="#777"/></svg></div>
        </div>
      </div>

      <div class="tabbar">
        <div class="c nav0"></div>
        <div class="c nav"><svg width="4" height="8" viewBox="0 0 4 8"><path d="M4 0v8L0 4z" fill="#ccc"/></svg></div>
        <div class="c nav"><svg width="4" height="8" viewBox="0 0 4 8"><path d="M0 0v8l4-4z" fill="#ccc"/></svg></div>
        <div class="c stab">pickupdump.sql_2021-07-14</div>
        <div class="c plus"><svg width="16" height="16" viewBox="0 0 16 16" fill="none" stroke="#777"><circle cx="8" cy="8" r="7.300"/><path d="M8 3.500v9M3.500 8h9" stroke-width="1.600"/></svg></div>
        <div class="c hd">${dots}</div>
        <div class="hs">
          <div class="sb"><svg width="4" height="8" viewBox="0 0 4 8"><path d="M4 0v8L0 4z" fill="#666"/></svg></div>
          <div class="hthumb"></div>
          <div class="htrack"></div>
          <div class="sb"><svg width="4" height="8" viewBox="0 0 4 8"><path d="M0 0v8l4-4z" fill="#666"/></svg></div>
        </div>
      </div>

      <div class="status">
        <div class="ready">Ready</div>
        ${macroI}
        <div class="stright">
          <div class="c vb active">${vNormal}</div>
          <div class="c vb">${vPage}</div>
          <div class="c vb">${vBreak}</div>
          <div class="c zm">-</div>
          <div class="slider"><div class="thumb"></div></div>
          <div class="c zm">+</div>
          <div class="pctz">100%</div>
        </div>
      </div>

      <div class="taskbar">
        <div class="c tk">${winI}</div><div class="c tk">${searchI}</div><div class="c tk">${taskI}</div><div class="sp3"></div>
        <div class="c ap">${pcI}</div>
        <div class="c ap run">${outlookI}</div>
        <div class="c ap run">${folderI}</div>
        <div class="c ap run">${chromeI}</div>
        <div class="c ap">${ieI}</div>
        <div class="c ap">${officeI("#2b579a", "W")}</div>
        <div class="c ap run act">${officeI("#217346", "X")}</div>
        <div class="c ap">${officeI("#d24726", "P")}</div>
        <div class="c ap">${uniI}</div>
        <div class="c ap">${officeI("#80397b", "N")}</div>
        <div class="c ap">${dbI}</div>
        <div class="c ap">${globeI}</div>
        <div class="c ap run">${skypeI}</div>
        <div class="tray">
          <div class="c tr1">${upI}</div><div class="c tr2">${batI}</div><div class="c tr3">${wifiI}</div><div class="c tr4">${spkI}</div>
          <div class="c eng">ENG</div>
          <div class="clock"><div>12:02 PM</div><div>9/6/2021</div></div>
          <div class="c tr7">${noteI}</div>
          <div class="edge"></div>
        </div>
      </div>
    `;
  }
}
